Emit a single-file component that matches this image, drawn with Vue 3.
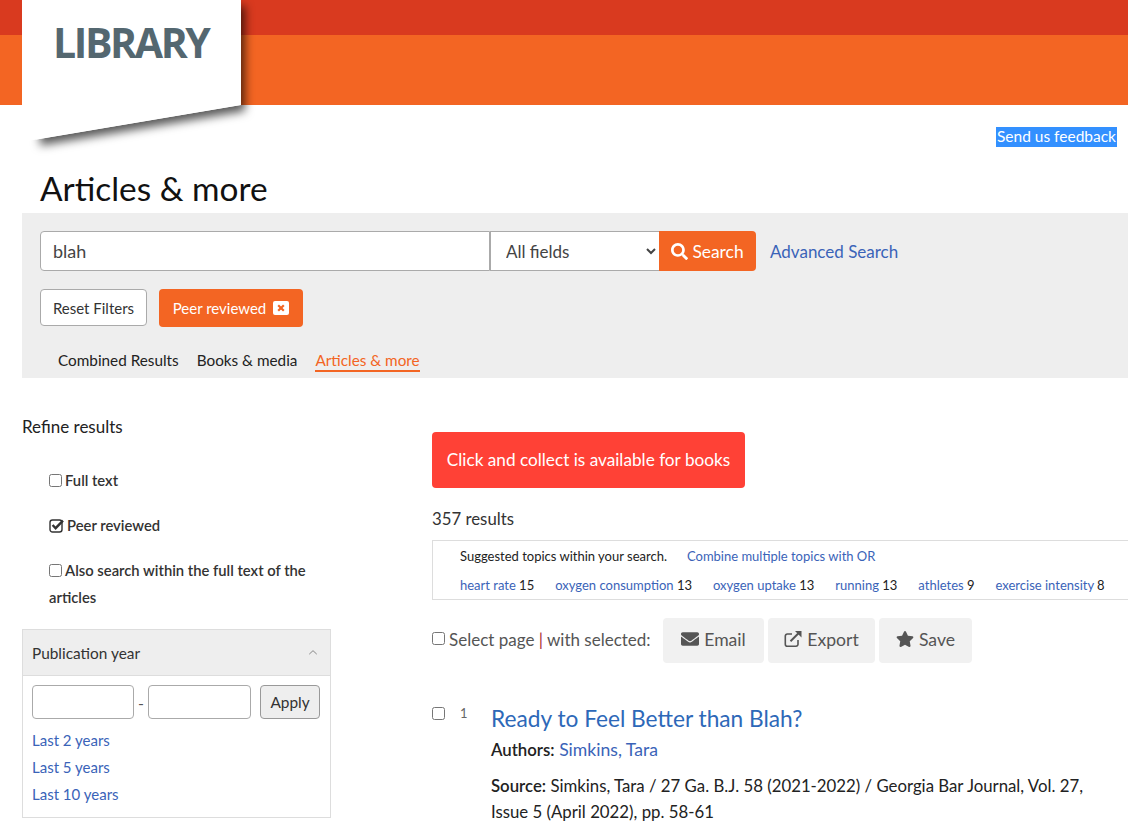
<script setup>
const topics = [
  { name: 'heart rate', count: 15 },
  { name: 'oxygen consumption', count: 13 },
  { name: 'oxygen uptake', count: 13 },
  { name: 'running', count: 13 },
  { name: 'athletes', count: 9 },
  { name: 'exercise intensity', count: 8 }
]
const years = ['Last 2 years', 'Last 5 years', 'Last 10 years']
</script>

<template>
  <div class="page">
    <header class="band">
      <div class="band-top"></div>
      <div class="band-bottom"></div>
      <div class="logo-wrap">
        <div class="logo-shadow"><div class="logo-shadow-shape"></div></div>
        <div class="logo"><span class="logo-text">LIBRARY</span></div>
      </div>
    </header>

    <div class="feedback-row"><a class="feedback">Send us feedback</a></div>
    <h1 class="title">Articles &amp; more</h1>

    <section class="search-panel">
      <div class="search-row">
        <input class="q" type="text" value="blah" />
        <select class="field"><option>All fields</option></select>
        <button class="go">
          <svg class="go-icon" viewBox="0 0 512 512"><path fill="currentColor" d="M505 442.7L405.3 343c-4.5-4.5-10.6-7-17-7H372c27.6-35.3 44-79.7 44-128C416 93.1 322.9 0 208 0S0 93.1 0 208s93.1 208 208 208c48.3 0 92.7-16.4 128-44v16.3c0 6.4 2.5 12.5 7 17l99.7 99.7c9.4 9.4 24.6 9.4 33.9 0l28.3-28.3c9.4-9.4 9.4-24.6.1-34zM208 336c-70.7 0-128-57.2-128-128 0-70.7 57.2-128 128-128 70.7 0 128 57.2 128 128 0 70.7-57.2 128-128 128z"/></svg>
          Search
        </button>
        <a class="advanced">Advanced Search</a>
      </div>
      <div class="filter-row">
        <button class="reset">Reset Filters</button>
        <button class="chip">
          Peer reviewed
          <svg class="chip-x" viewBox="0 0 16 14"><rect width="16" height="14" rx="2" fill="#fff"/><path d="M5.2 4.2l5.6 5.6M10.8 4.2l-5.6 5.6" stroke="#f36523" stroke-width="2.2" fill="none"/></svg>
        </button>
      </div>
      <nav class="tabs">
        <a class="tab">Combined Results</a>
        <a class="tab">Books &amp; media</a>
        <a class="tab active">Articles &amp; more</a>
      </nav>
    </section>

    <div class="body">
      <aside class="side">
        <div class="refine">Refine results</div>
        <label class="opt"><input type="checkbox" /><span>Full text</span></label>
        <label class="opt">
          <svg class="checked" viewBox="0 0 16 16"><rect x="1" y="2" width="12" height="12" rx="2.5" fill="none" stroke="#333" stroke-width="1.4"/><path d="M3.6 7l3 3.2L14 2.6" fill="none" stroke="#333" stroke-width="2.4"/></svg>
          <span>Peer reviewed</span>
        </label>
        <label class="opt long"><input type="checkbox" /><span>Also search within the full text of the articles</span></label>

        <div class="year">
          <div class="year-head">
            <span>Publication year</span>
            <svg class="chev" viewBox="0 0 12 8"><path d="M1.5 6L6 1.8 10.5 6" fill="none" stroke="#888" stroke-width="1.2"/></svg>
          </div>
          <div class="year-body">
            <div class="year-inputs">
              <input class="yr yr1" type="text" />
              <span class="dash">-</span>
              <input class="yr yr2" type="text" />
              <button class="apply">Apply</button>
            </div>
            <a v-for="y in years" :key="y" class="year-link">{{ y }}</a>
          </div>
        </div>
      </aside>

      <main class="main">
        <div class="alert">Click and collect is available for books</div>
        <div class="count">357 results</div>
        <div class="topics">
          <div class="topics-head">
            <span>Suggested topics within your search.</span>
            <a class="link">Combine multiple topics with OR</a>
          </div>
          <div class="topics-list">
            <span v-for="t in topics" :key="t.name" class="topic"><a class="link">{{ t.name }}</a> {{ t.count }}</span>
          </div>
        </div>
        <div class="toolbar">
          <label class="select-page"><input type="checkbox" /><span>Select page <i class="sep">|</i> with selected:</span></label>
          <button class="tool t-email">
            <svg class="ti" viewBox="0 0 512 512"><path fill="currentColor" d="M502.3 190.8c3.9-3.1 9.7-.2 9.7 4.7V400c0 26.5-21.5 48-48 48H48c-26.5 0-48-21.5-48-48V195.6c0-5 5.7-7.8 9.7-4.7 22.4 17.4 52.1 39.5 154.1 113.6 21.1 15.4 56.7 47.8 92.2 47.6 35.7.3 72-32.8 92.3-47.6 102-74.1 131.6-96.3 154-113.7zM256 320c23.2.4 56.6-29.2 73.4-41.4 132.7-96.3 142.8-104.7 173.4-128.7 5.8-4.5 9.2-11.5 9.2-18.9v-19c0-26.5-21.5-48-48-48H48C21.5 64 0 85.5 0 112v19c0 7.4 3.4 14.3 9.2 18.9 30.6 23.9 40.7 32.4 173.4 128.7 16.8 12.2 50.2 41.8 73.4 41.4z"/></svg>
            Email
          </button>
          <button class="tool t-export">
            <svg class="ti" viewBox="0 0 18 18"><path d="M14 10v4.2a2 2 0 0 1-2 2H3.3a2 2 0 0 1-2-2V6a2 2 0 0 1 2-2H8" fill="none" stroke="currentColor" stroke-width="1.6"/><path d="M6.5 11.2L15 2.8" stroke="currentColor" stroke-width="2" fill="none"/><path d="M11 1h6.5v6.5z" fill="currentColor"/></svg>
            Export
          </button>
          <button class="tool t-save">
            <svg class="ti" viewBox="0 0 576 512"><path fill="currentColor" d="M259.3 17.8L194 150.2 47.9 171.5c-26.2 3.8-36.7 36.1-17.7 54.6l105.7 103-25 145.5c-4.5 26.3 23.2 46 46.4 33.7L288 439.6l130.7 68.7c23.2 12.2 50.9-7.4 46.4-33.7l-25-145.5 105.7-103c19-18.5 8.5-50.8-17.7-54.6L382 150.2 316.7 17.8c-11.7-23.6-45.6-23.9-57.4 0z"/></svg>
            Save
          </button>
        </div>
        <article class="result">
          <div class="result-mark">
            <input type="checkbox" />
            <span class="num">1</span>
          </div>
          <div class="result-body">
            <a class="result-title">Ready to Feel Better than Blah?</a>
            <div class="authors"><b>Authors:</b> <a class="link">Simkins, Tara</a></div>
            <div class="source"><b>Source:</b> Simkins, Tara / 27 Ga. B.J. 58 (2021-2022) / Georgia Bar Journal, Vol. 27, Issue 5 (April 2022), pp. 58-61</div>
          </div>
        </article>
      </main>
    </div>
  </div>
</template>

<style>
html, body { margin: 0; background: #fff; overflow: hidden; }
</style>

<style scoped>
.page { height: 830px; overflow: hidden; font-family: Lato, "Open Sans", sans-serif; color: #222; font-size: 16px; }
button, input, select { font-family: inherit; box-sizing: border-box; }

.band { position: relative; height: 105px; }
.band-top { height: 35px; background: #d93a1f; }
.band-bottom { height: 70px; background: #f36523; }
.logo-wrap { position: absolute; left: 22px; top: 0; width: 219px; height: 142px; }
.logo-shadow { position: absolute; inset: 0; filter: drop-shadow(4px 6px 5px rgba(0,0,0,.65)); }
.logo-shadow-shape { width: 100%; height: 100%; background: #fff; clip-path: polygon(14px 0, 100% 0, 100% 105px, 14px 139.6px); }
.logo { position: absolute; inset: 0; background: #fff; clip-path: polygon(0 0, 100% 0, 100% 105px, 0 142px); }
.logo-text { display: block; padding: 17px 0 0 31px; font-size: 41px; line-height: 50px; font-weight: 700; color: #546770; font-family: "Open Sans", sans-serif; letter-spacing: -2.4px; }

.feedback-row { display: flex; justify-content: flex-end; padding: 22px 11px 0 0; height: 20px; }
.feedback { background: #3390ff; color: #fff; height: 20px; line-height: 19px; font-size: 15.5px; padding: 0 1px; }
.title { margin: 0; padding: 18px 0 0 40px; font-size: 33.4px; font-weight: 400; line-height: 46px; height: 48px; color: #111; }

.search-panel { margin: 0 0 0 22px; height: 165px; background: #eee; box-sizing: border-box; padding: 18px 0 0 18px; }
.search-row { display: flex; align-items: center; height: 40px; }
.q { width: 450px; height: 40px; border: 1px solid #aaa; border-radius: 4px 0 0 4px; padding: 0 12px; font-size: 18px; color: #444; background: #fff; }
.field { width: 169px; height: 40px; border: 1px solid #aaa; border-width: 1px 0 1px 1px; border-radius: 0; background: #fff; padding: 0 11px; font-size: 17px; color: #444; }
.go { width: 97px; height: 40px; border: 0; border-radius: 0 4px 4px 0; background: #f36523; color: #fff; font-size: 17.4px; display: flex; align-items: center; justify-content: center; gap: 4px; padding: 0; }
.go-icon { width: 17px; height: 17px; }
.advanced { margin-left: 14px; color: #3a63b8; font-size: 17px; }
.filter-row { display: flex; gap: 12px; margin-top: 18px; align-items: flex-start; }
.reset { width: 107px; height: 37px; background: #fff; border: 1px solid #aaa; border-radius: 4px; font-size: 15px; color: #333; padding: 0; }
.chip { width: 144px; height: 38px; background: #f36523; border: 0; border-radius: 4px; color: #fff; font-size: 15px; display: flex; align-items: center; justify-content: center; gap: 7px; padding: 0; }
.chip-x { width: 16px; height: 14px; }
.tabs { display: flex; gap: 18px; margin-top: 24px; padding-left: 18px; font-size: 15.3px; }
.tab { color: #222; line-height: 19px; }
.tab.active { color: #f36523; border-bottom: 2px solid #f36523; }

.body { display: flex; padding: 0 0 0 22px; }
.side { width: 309px; flex: none; }
.refine { margin-top: 39px; font-size: 17px; line-height: 20px; color: #222; }
.opt { display: block; margin: 24px 0 0 27px; font-size: 14.8px; line-height: 27px; font-weight: 600; color: #333; height: 21px; width: 282px; }
.opt input { margin: 0 3px 0 0; width: 13px; height: 13px; vertical-align: -1px; }
.opt:first-of-type { margin-top: 30px; }
.long { height: 54px; }
.checked { width: 16px; height: 16px; vertical-align: -3px; margin-right: 2px; }
.year { margin-top: 18px; height: 189px; box-sizing: border-box; border: 1px solid #ddd; }
.year-head { height: 45px; background: #eee; border-bottom: 1px solid #ddd; display: flex; align-items: center; justify-content: space-between; padding: 0 12px 0 9px; font-size: 15.4px; color: #333; }
.chev { width: 10px; height: 7px; }
.year-body { padding: 9px 10px 0 9px; }
.year-inputs { display: flex; align-items: center; margin-bottom: 8px; }
.yr { height: 34px; border: 1px solid #aaa; border-radius: 4px; background: #fff; }
.yr1 { width: 102px; }
.yr2 { width: 103px; }
.dash { width: 14px; text-align: center; color: #555; }
.apply { margin-left: 9px; width: 60px; height: 34px; border: 1px solid #999; border-radius: 4px; background: #eee; font-size: 15.4px; color: #333; padding: 0; }
.year-link { display: block; color: #3a63b8; font-size: 15px; line-height: 27px; }

.main { margin-left: 101px; flex: none; width: 720px; }
.alert { margin-top: 54px; width: 313px; height: 56px; line-height: 56px; text-align: center; background: #ff4136; color: #fff; border-radius: 4px; font-size: 17.2px; }
.count { margin-top: 20px; font-size: 16.8px; line-height: 22px; color: #333; }
.topics { margin-top: 10px; height: 60px; box-sizing: border-box; border: 1px solid #ddd; border-right: 0; padding: 6px 0 0 27px; font-size: 13px; color: #222; }
.topics-head { display: flex; gap: 20px; line-height: 18px; }
.topics-list { display: flex; gap: 21px; margin-top: 11px; line-height: 18px; }
.link { color: #3a63b8; }
.toolbar { display: flex; align-items: center; margin-top: 18px; height: 45px; }
.select-page { width: 231px; font-size: 17px; color: #555; margin-top: -3px; }
.select-page input { margin: 0 4px 0 0; vertical-align: 1px; }
.sep { font-style: normal; color: #a33; }
.tool { height: 45px; border: 0; border-radius: 4px; background: #f1f1f1; color: #555; font-size: 17.6px; display: flex; align-items: center; justify-content: center; gap: 5px; padding: 0 0 3px; margin-right: 4px; }
.t-email { width: 101px; }
.t-export { width: 107px; }
.t-save { width: 93px; }
.ti { width: 18px; height: 18px; }
.result { display: flex; margin-top: 40px; }
.result-mark { width: 59px; flex: none; display: flex; gap: 15px; }
.result-mark input { margin: 4px 0 0 0; width: 13px; height: 13px; }
.num { font-size: 13px; line-height: 18px; color: #666; margin-top: 1px; }
.result-body { width: 600px; }
.result-title { display: block; font-size: 22.7px; line-height: 32px; color: #2d68b8; }
.authors { font-size: 17.6px; line-height: 26px; margin-top: 2px; }
.authors b, .source b { font-weight: 600; font-size: 16.8px; }
.source { font-size: 16.8px; line-height: 26px; margin-top: 10px; }
</style>
